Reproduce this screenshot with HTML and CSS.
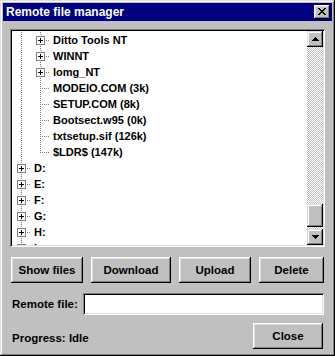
FILE: index.html
```html
<!DOCTYPE html>
<html>
<head>
<meta charset="utf-8">
<title>Remote file manager</title>
<link rel="stylesheet" href="styles.css">
</head>
<body>
<div class="window">
  <div class="titlebar">
    <span class="title">Remote file manager</span>
    <button class="title-close" aria-label="Close">
      <svg width="8" height="7" viewBox="0 0 8 7" shape-rendering="crispEdges"><path d="M0 0h2v1h-2z M6 0h2v1h-2z M1 1h2v1h-2z M5 1h2v1h-2z M2 2h4v1h-4z M3 3h2v1h-2z M2 4h4v1h-4z M1 5h2v1h-2z M5 5h2v1h-2z M0 6h2v1h-2z M6 6h2v1h-2z" fill="#000"/></svg>
    </button>
  </div>
  <div class="content">
    <div class="tree">
      <div class="tree-list">
        <div class="row"><span class="cell v"></span><span class="cell t"><span class="plus"></span></span><span class="label">Ditto Tools NT</span></div>
        <div class="row"><span class="cell v"></span><span class="cell t"><span class="plus"></span></span><span class="label">WINNT</span></div>
        <div class="row"><span class="cell v"></span><span class="cell t"><span class="plus"></span></span><span class="label">lomg_NT</span></div>
        <div class="row"><span class="cell v"></span><span class="cell t"></span><span class="label">MODEIO.COM (3k)</span></div>
        <div class="row"><span class="cell v"></span><span class="cell t"></span><span class="label">SETUP.COM (8k)</span></div>
        <div class="row"><span class="cell v"></span><span class="cell t"></span><span class="label">Bootsect.w95 (0k)</span></div>
        <div class="row"><span class="cell v"></span><span class="cell t"></span><span class="label">txtsetup.sif (126k)</span></div>
        <div class="row"><span class="cell v"></span><span class="cell l"></span><span class="label">$LDR$ (147k)</span></div>
        <div class="row"><span class="cell t"><span class="plus"></span></span><span class="label">D:</span></div>
        <div class="row"><span class="cell t"><span class="plus"></span></span><span class="label">E:</span></div>
        <div class="row"><span class="cell t"><span class="plus"></span></span><span class="label">F:</span></div>
        <div class="row"><span class="cell t"><span class="plus"></span></span><span class="label">G:</span></div>
        <div class="row"><span class="cell t"><span class="plus"></span></span><span class="label">H:</span></div>
        <div class="row"><span class="cell t"><span class="plus"></span></span><span class="label">I:</span></div>
      </div>
      <div class="scrollbar">
        <div class="sb-btn">
          <svg width="7" height="4" viewBox="0 0 7 4" shape-rendering="crispEdges"><path d="M3 0h1v1h-1z M2 1h3v1h-3z M1 2h5v1h-5z M0 3h7v1h-7z" fill="#000"/></svg>
        </div>
        <div class="sb-track"><div class="sb-thumb"></div></div>
        <div class="sb-btn">
          <svg width="7" height="4" viewBox="0 0 7 4" shape-rendering="crispEdges"><path d="M0 0h7v1h-7z M1 1h5v1h-5z M2 2h3v1h-3z M3 3h1v1h-1z" fill="#000"/></svg>
        </div>
      </div>
    </div>

    <div class="buttons">
      <button class="btn w-show">Show files</button>
      <button class="btn w-down">Download</button>
      <button class="btn w-up">Upload</button>
      <button class="btn w-del">Delete</button>
    </div>

    <div class="remote">
      <span class="remote-label">Remote file:</span>
      <div class="field"></div>
    </div>

    <div class="footer">
      <span class="progress">Progress: Idle</span>
      <button class="btn w-close">Close</button>
    </div>
  </div>
</div>
</body>
</html>
```

FILE: styles.css
```css
html, body {
  margin: 0;
  padding: 0;
  background: #c0c0c0;
}

.window {
  width: 335px;
  height: 356px;
  box-sizing: border-box;
  padding: 3px;
  background: #c0c0c0;
  box-shadow: inset -1px -1px #000, inset 1px 1px #dfdfdf, inset -2px -2px #808080, inset 2px 2px #fff;
  display: flex;
  flex-direction: column;
  font-family: "Liberation Sans", Arial, sans-serif;
  font-weight: bold;
  color: #000;
}

.titlebar {
  height: 18px;
  background: #000080;
  color: #fff;
  display: flex;
  align-items: center;
  justify-content: space-between;
  padding: 0 2px 0 3px;
  font-size: 12px;
  line-height: 18px;
}

.title-close {
  width: 16px;
  height: 14px;
  padding: 0;
  border: 0;
  margin: 0;
  background: #c0c0c0;
  box-shadow: inset -1px -1px #000, inset 1px 1px #fff, inset -2px -2px #808080, inset 2px 2px #dfdfdf;
  display: flex;
  align-items: center;
  justify-content: center;
}

.title-close svg {
  display: block;
  margin: 0 0 1px 0;
}

.content {
  flex: 1;
  padding: 8px 7px 0 7px;
  display: flex;
  flex-direction: column;
}

.tree {
  height: 218px;
  box-sizing: border-box;
  padding: 2px;
  background: #fff;
  box-shadow: inset 1px 1px #808080, inset -1px -1px #fff, inset 2px 2px #000, inset -2px -2px #dfdfdf;
  display: flex;
}

.tree-list {
  flex: 1;
  overflow: hidden;
  padding-top: 1px;
  font-size: 11px;
}

.row {
  height: 16px;
  display: flex;
  align-items: flex-start;
}

.cell {
  flex: 0 0 19px;
  width: 19px;
  height: 16px;
  box-sizing: border-box;
  padding: 4px 0 0 5px;
}

.cell.v {
  background: repeating-linear-gradient(to bottom, #808080 0 1px, transparent 1px 2px) 9px 0 / 1px 16px no-repeat;
}

.cell.t {
  background:
    repeating-linear-gradient(to bottom, #808080 0 1px, transparent 1px 2px) 9px 0 / 1px 16px no-repeat,
    repeating-linear-gradient(to right, #808080 0 1px, transparent 1px 2px) 9px 8px / 10px 1px no-repeat;
}

.cell.l {
  background:
    repeating-linear-gradient(to bottom, #808080 0 1px, transparent 1px 2px) 9px 0 / 1px 9px no-repeat,
    repeating-linear-gradient(to right, #808080 0 1px, transparent 1px 2px) 9px 8px / 10px 1px no-repeat;
}

.plus {
  display: block;
  width: 9px;
  height: 9px;
  box-sizing: border-box;
  border: 1px solid #808080;
  background:
    linear-gradient(#000, #000) 1px 3px / 5px 1px no-repeat,
    linear-gradient(#000, #000) 3px 1px / 1px 5px no-repeat,
    #fff;
}

.label {
  margin-left: 3px;
  line-height: 16px;
  white-space: nowrap;
}

.scrollbar {
  width: 16px;
  flex: 0 0 16px;
  display: flex;
  flex-direction: column;
}

.sb-btn {
  height: 16px;
  flex: 0 0 16px;
  background: #c0c0c0;
  box-shadow: inset -1px -1px #000, inset 1px 1px #dfdfdf, inset -2px -2px #808080, inset 2px 2px #fff;
  display: flex;
  align-items: center;
  justify-content: center;
}

.sb-btn svg {
  display: block;
}

.sb-track {
  flex: 1;
  display: flex;
  flex-direction: column;
  justify-content: flex-end;
  background: repeating-conic-gradient(#c0c0c0 0 25%, #fff 0 50%) 0 0 / 2px 2px;
}

.sb-thumb {
  height: 23px;
  margin-bottom: 2px;
  background: #c0c0c0;
  box-shadow: inset -1px -1px #000, inset 1px 1px #dfdfdf, inset -2px -2px #808080, inset 2px 2px #fff;
}

.btn {
  height: 26px;
  padding: 0;
  margin: 0;
  border: 0;
  background: #c0c0c0;
  box-shadow: inset -1px -1px #000, inset 1px 1px #fff, inset -2px -2px #808080, inset 2px 2px #dfdfdf;
  font-family: "Liberation Sans", Arial, sans-serif;
  font-weight: bold;
  font-size: 11.5px;
  color: #000;
}

.buttons {
  margin-top: 10px;
  margin-left: 1px;
  display: flex;
  gap: 8px;
}

.w-show { width: 72px; }
.w-down { width: 80px; }
.w-up { width: 72px; }
.w-del { width: 65px; }

.remote {
  margin-top: 10px;
  height: 22px;
  display: flex;
  align-items: center;
  font-size: 11.5px;
}

.remote-label {
  width: 71px;
  margin-left: 2px;
}

.field {
  width: 241px;
  height: 22px;
  box-sizing: border-box;
  background: #fff;
  box-shadow: inset 1px 1px #808080, inset -1px -1px #fff, inset 2px 2px #000, inset -2px -2px #dfdfdf;
}

.footer {
  margin-top: 8px;
  display: flex;
  align-items: center;
  justify-content: space-between;
  font-size: 11.5px;
}

.progress {
  margin-left: 2px;
  padding-top: 4px;
}

.w-close {
  width: 70px;
  margin-right: 2px;
}
```
